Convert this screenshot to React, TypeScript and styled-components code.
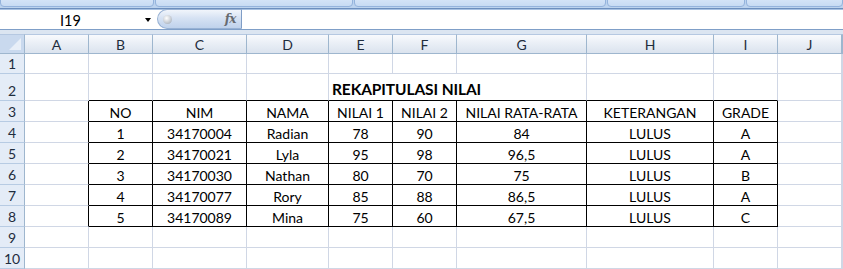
import React from 'react';
import styled, { createGlobalStyle } from 'styled-components';

const GRID = '#d0d7e5';
const HEAD_LINE = '#9eb6ce';

const COLS = [
    { name: 'A', width: 64 },
    { name: 'B', width: 64 },
    { name: 'C', width: 94 },
    { name: 'D', width: 82 },
    { name: 'E', width: 64 },
    { name: 'F', width: 64 },
    { name: 'G', width: 130 },
    { name: 'H', width: 127 },
    { name: 'I', width: 64 },
    { name: 'J', width: 64 },
];

const ROW_HEIGHTS = [20, 27, 21, 21, 21, 21, 21, 21, 21, 21];

const HEADERS = ['NO', 'NIM', 'NAMA', 'NILAI 1', 'NILAI 2', 'NILAI RATA-RATA', 'KETERANGAN', 'GRADE'];

const DATA = [
    ['1', '34170004', 'Radian', '78', '90', '84', 'LULUS', 'A'],
    ['2', '34170021', 'Lyla', '95', '98', '96,5', 'LULUS', 'A'],
    ['3', '34170030', 'Nathan', '80', '70', '75', 'LULUS', 'B'],
    ['4', '34170077', 'Rory', '85', '88', '86,5', 'LULUS', 'A'],
    ['5', '34170089', 'Mina', '75', '60', '67,5', 'LULUS', 'C'],
];

const RIBBON_GROUPS = [154, 198, 252, 138];

const GlobalStyle = createGlobalStyle`
    html, body {
        margin: 0;
        padding: 0;
        background: #ffffff;
        overflow: hidden;
    }
    body {
        font-family: "Lato", "Noto Sans", sans-serif;
        color: #000;
    }
`;

function cellText(row: number, col: number): string {
    // row is the 1-based sheet row, col the 0-based column index (A = 0)
    if (row === 3 && col >= 1 && col <= 8) return HEADERS[col - 1];
    if (row >= 4 && row <= 8 && col >= 1 && col <= 8) return DATA[row - 4][col - 1];
    return '';
}

function App() {
    const rows: React.ReactNode[] = [];

    ROW_HEIGHTS.forEach((_, i) => {
        const row = i + 1;
        rows.push(<RowHeader key={`rh${row}`}>{row}</RowHeader>);

        for (let col = 0; col < COLS.length; col++) {
            if (row === 2 && col === 4) {
                // title overflows E2 into F2:G2
                rows.push(
                    <Cell key={`c${row}-${col}`} $span={3} $align="left">
                        <Title>REKAPITULASI NILAI</Title>
                    </Cell>
                );
                col += 2;
                continue;
            }
            const inTable = row >= 3 && row <= 8;
            const darkRight = inTable && col <= 8;
            const darkBottom = row >= 2 && row <= 8 && col >= 1 && col <= 8;
            rows.push(
                <Cell key={`c${row}-${col}`} $darkRight={darkRight} $darkBottom={darkBottom}>
                    {cellText(row, col)}
                </Cell>
            );
        }
        rows.push(<Cell key={`f${row}`} />);
    });

    return (
        <Window>
            <GlobalStyle />
            <RibbonEdge>
                {RIBBON_GROUPS.map((w, i) => (
                    <RibbonGroup key={i} $width={w} />
                ))}
                <RibbonGroup />
            </RibbonEdge>

            <FormulaBar>
                <NameBox>
                    <NameText>I19</NameText>
                    <DropArrow />
                </NameBox>
                <FxPill>
                    <Knob />
                    <FxLabel>fx</FxLabel>
                </FxPill>
                <FormulaInput />
            </FormulaBar>
            <BarGap />

            <Sheet>
                <Corner>
                    <CornerTriangle />
                </Corner>
                {COLS.map((c) => (
                    <ColHeader key={c.name}>{c.name}</ColHeader>
                ))}
                <ColHeader />
                {rows}
            </Sheet>
        </Window>
    );
}

const Window = styled.div`
    width: 843px;
    height: 269px;
    overflow: hidden;
    display: flex;
    flex-direction: column;
    background: #ffffff;
`;

const RibbonEdge = styled.div`
    display: flex;
    gap: 1px;
    height: 9px;
    box-sizing: border-box;
    background: #bcd3ee;
    border-bottom: 1px solid #6d8fbd;
    padding-bottom: 1px;
`;

const RibbonGroup = styled.div<{ $width?: number }>`
    ${(p) => (p.$width ? `width: ${p.$width}px;` : 'flex: 1;')}
    flex-shrink: 0;
    box-sizing: border-box;
    margin-top: -4px;
    background: linear-gradient(#d9e7f8, #c7dbf3);
    border: 1px solid #94b3dc;
    border-radius: 0 0 4px 4px;
`;

const FormulaBar = styled.div`
    display: flex;
    height: 21px;
    box-sizing: border-box;
    background: #ffffff;
    border-top: 1px solid #a7c1e2;
    border-bottom: 1px solid #7f9fc8;
`;

const NameBox = styled.div`
    position: relative;
    width: 157px;
    display: flex;
    align-items: center;
    justify-content: center;
    box-sizing: border-box;
`;

const NameText = styled.span`
    font-family: "Lato", sans-serif;
    font-size: 14.5px;
    margin-left: -16px;
    margin-top: 1px;
`;

const DropArrow = styled.span`
    position: absolute;
    right: 6px;
    top: 8px;
    width: 0;
    height: 0;
    border-left: 3.5px solid transparent;
    border-right: 3.5px solid transparent;
    border-top: 4px solid #000;
`;

const FxPill = styled.div`
    width: 85px;
    margin-top: -1px;
    box-sizing: border-box;
    display: flex;
    align-items: center;
    justify-content: space-between;
    padding: 0 5px 0 5px;
    background: linear-gradient(#f1f5fb, #d6e2f3 45%, #bfd2ec);
    border: 1px solid #97b1d4;
    border-right: 1px solid #7f9dc6;
    border-radius: 11px 0 0 11px;
`;

const Knob = styled.span`
    width: 9px;
    height: 9px;
    border-radius: 50%;
    background: radial-gradient(circle at 40% 35%, #ffffff, #c2c8d0 60%, #959fab);
`;

const FxLabel = styled.span`
    font-family: "DejaVu Serif", "Liberation Serif", serif;
    font-style: italic;
    font-weight: bold;
    font-size: 12px;
    color: #666a70;
    letter-spacing: -0.5px;
`;

const FormulaInput = styled.div`
    flex: 1;
    background: #ffffff;
`;

const BarGap = styled.div`
    height: 4px;
    background: #dbe5f1;
`;

const Sheet = styled.div`
    display: grid;
    grid-template-columns: 25px ${COLS.map((c) => `${c.width}px`).join(' ')} 1fr;
    grid-template-rows: 20px ${ROW_HEIGHTS.map((h) => `${h}px`).join(' ')};
    font-family: "Lato", "Noto Sans", sans-serif;
    font-size: 14px;
`;

const HeaderBase = styled.div`
    box-sizing: border-box;
    display: flex;
    align-items: center;
    justify-content: center;
    color: #1f2d3d;
    font-size: 14px;
`;

const Corner = styled(HeaderBase)`
    position: relative;
    background: #c9d9ee;
    border-right: 1px solid ${HEAD_LINE};
    border-bottom: 1px solid ${HEAD_LINE};
    border-top: 1px solid #b5c8e1;
`;

const CornerTriangle = styled.span`
    position: absolute;
    right: 3px;
    bottom: 3px;
    width: 0;
    height: 0;
    border-left: 12px solid transparent;
    border-bottom: 12px solid #e8eff8;
`;

const ColHeader = styled(HeaderBase)`
    background: linear-gradient(#f8fafd, #eaeff6 45%, #dbe3ee);
    border-top: 1px solid #b5c8e1;
    border-right: 1px solid ${HEAD_LINE};
    border-bottom: 1px solid ${HEAD_LINE};
    padding-top: 1px;
`;

const RowHeader = styled(HeaderBase)`
    align-items: flex-end;
    background: #e4ecf7;
    border-right: 1px solid ${HEAD_LINE};
    border-bottom: 1px solid #b7cbe3;
    line-height: 17px;
    padding-bottom: 1px;
`;

const Cell = styled.div<{
    $align?: 'left' | 'center';
    $darkRight?: boolean;
    $darkBottom?: boolean;
    $span?: number;
}>`
    box-sizing: border-box;
    display: flex;
    align-items: flex-end;
    justify-content: ${(p) => (p.$align === 'left' ? 'flex-start' : 'center')};
    grid-column: ${(p) => (p.$span ? `span ${p.$span}` : 'auto')};
    border-right: 1px solid ${(p) => (p.$darkRight ? '#000' : GRID)};
    border-bottom: 1px solid ${(p) => (p.$darkBottom || p.$span ? '#000' : GRID)};
    line-height: 17px;
    white-space: nowrap;
    overflow: hidden;
    color: #000;
`;

const Title = styled.span`
    font-weight: bold;
    font-size: 15.5px;
    line-height: 18px;
    padding: 0 0 2px 3px;
    letter-spacing: -0.1px;
`;

export default App;
